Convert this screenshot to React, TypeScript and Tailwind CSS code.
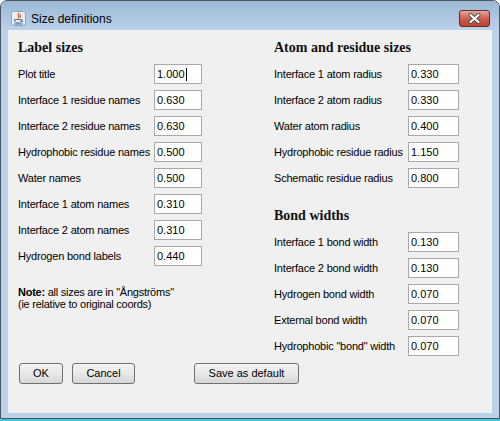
import React from 'react';

const font = "font-['Liberation_Sans',Arial,sans-serif]";

const leftRows: [string, string][] = [
  ['Plot title', '1.000'],
  ['Interface 1 residue names', '0.630'],
  ['Interface 2 residue names', '0.630'],
  ['Hydrophobic residue names', '0.500'],
  ['Water names', '0.500'],
  ['Interface 1 atom names', '0.310'],
  ['Interface 2 atom names', '0.310'],
  ['Hydrogen bond labels', '0.440'],
];

const atomRows: [string, string][] = [
  ['Interface 1 atom radius', '0.330'],
  ['Interface 2 atom radius', '0.330'],
  ['Water atom radius', '0.400'],
  ['Hydrophobic residue radius', '1.150'],
  ['Schematic residue radius', '0.800'],
];

const bondRows: [string, string][] = [
  ['Interface 1 bond width', '0.130'],
  ['Interface 2 bond width', '0.130'],
  ['Hydrogen bond width', '0.070'],
  ['External bond width', '0.070'],
  ['Hydrophobic "bond" width', '0.070'],
];

const Heading = ({ children, className = '' }: { children: React.ReactNode; className?: string }) => (
  <div className={`font-['Liberation_Serif','Times_New_Roman',serif] font-bold text-[14px] leading-[16px] text-[#111] mb-[8px] ${className}`}>
    {children}
  </div>
);

const Field = ({ label, value, labelW, boxW, caret }: { label: string; value: string; labelW: string; boxW: string; caret?: boolean }) => (
  <div className="flex items-center h-[20px]">
    <span className={`${labelW} shrink-0 text-[11px] tracking-[-0.2px] text-black whitespace-nowrap`}>{label}</span>
    <div className={`${boxW} h-[20px] bg-white border border-[#a9a9a9] flex items-center pl-[2px] text-[11px] text-black`}>
      <span>{value}</span>
      {caret && <span className="w-px h-[13px] bg-black ml-[1px]" />}
    </div>
  </div>
);

const Button = ({ children, w }: { children: React.ReactNode; w: string }) => (
  <div className={`${w} h-[21px] rounded-[3px] border border-[#707070] bg-gradient-to-b from-[#f3f3f3] via-[#e9e9e9] to-[#d6d6d6] flex items-center justify-center text-[11px] text-black`}>
    {children}
  </div>
);

export default function App() {
  return (
    <div className={`w-[500px] h-[421px] bg-white flex flex-col ${font}`}>
      <div className="w-[500px] h-[419px] border border-[#4b5560] rounded-t-[7px] bg-[#bad2ea] flex flex-col overflow-hidden">
        {/* title bar */}
        <div className="h-[29px] shrink-0 flex items-start bg-gradient-to-b from-[#9cb8d6] to-[#bad2ea] pl-[10px] pr-[9px]">
          <svg width="15" height="15" viewBox="0 0 15 15" className="mt-[10px]">
            <rect x="0.5" y="0.5" width="14" height="14" rx="2" fill="#e9eef4" stroke="#8fa3b8" />
            <path d="M8 2 C6 4 9 5 7 7.5 M9.5 3.5 C8.5 5 10 5.5 9 7" stroke="#e0641e" strokeWidth="1.2" fill="none" />
            <path d="M3.5 8.5 H10.5 C10.5 11 9 12 7 12 C5 12 3.5 11 3.5 8.5 Z" fill="none" stroke="#4a6ea0" strokeWidth="1" />
            <path d="M10.5 9 C12.5 9 12.5 11 10 11" stroke="#4a6ea0" strokeWidth="0.9" fill="none" />
            <path d="M3 13 H12" stroke="#4a6ea0" strokeWidth="1" />
          </svg>
          <span className="ml-[5px] mt-[10px] text-[12px] leading-[16px] text-black">Size definitions</span>
          <div className="ml-auto mt-[9px] w-[31px] h-[17px] rounded-[3px] border border-[#6b2b24] bg-gradient-to-b from-[#e7a89d] via-[#cf5f50] to-[#c0412f] flex items-center justify-center">
            <svg width="13" height="11" viewBox="0 0 13 11">
              <path d="M2.5 2 L10.5 9 M10.5 2 L2.5 9" stroke="#4b4b4b" strokeWidth="4" strokeLinecap="round" />
              <path d="M2.5 2 L10.5 9 M10.5 2 L2.5 9" stroke="#ffffff" strokeWidth="2.2" strokeLinecap="round" />
            </svg>
          </div>
        </div>

        {/* content */}
        <div className="mx-[7px] h-[383px] shrink-0 bg-[#f0f0f0] pl-[10px] pt-[10px] flex flex-col">
          <div className="flex items-start">
            <div className="w-[256px] shrink-0 flex flex-col">
              <Heading>Label sizes</Heading>
              <div className="flex flex-col gap-[6px]">
                {leftRows.map(([l, v], i) => (
                  <Field key={l} label={l} value={v} labelW="w-[136px]" boxW="w-[48px]" caret={i === 0} />
                ))}
              </div>
              <div className="mt-[20px] text-[11px] leading-[12px] tracking-[-0.25px] text-black">
                <div>
                  <span className="font-bold">Note:</span> all sizes are in "Ångströms"
                </div>
                <div>(ie relative to original coords)</div>
              </div>
            </div>
            <div className="flex flex-col">
              <Heading>Atom and residue sizes</Heading>
              <div className="flex flex-col gap-[6px]">
                {atomRows.map(([l, v]) => (
                  <Field key={l} label={l} value={v} labelW="w-[134px]" boxW="w-[51px]" />
                ))}
              </div>
              <Heading className="mt-[20px]">Bond widths</Heading>
              <div className="flex flex-col gap-[6px]">
                {bondRows.map(([l, v]) => (
                  <Field key={l} label={l} value={v} labelW="w-[134px]" boxW="w-[51px]" />
                ))}
              </div>
            </div>
          </div>
          <div className="mt-[7px] pl-[1px] flex items-center">
            <Button w="w-[44px]">OK</Button>
            <div className="ml-[9px]">
              <Button w="w-[63px]">Cancel</Button>
            </div>
            <div className="ml-[59px]">
              <Button w="w-[105px]">Save as default</Button>
            </div>
          </div>
        </div>
      </div>
      <div className="h-[2px] bg-[#3fc6d8]" />
    </div>
  );
}
